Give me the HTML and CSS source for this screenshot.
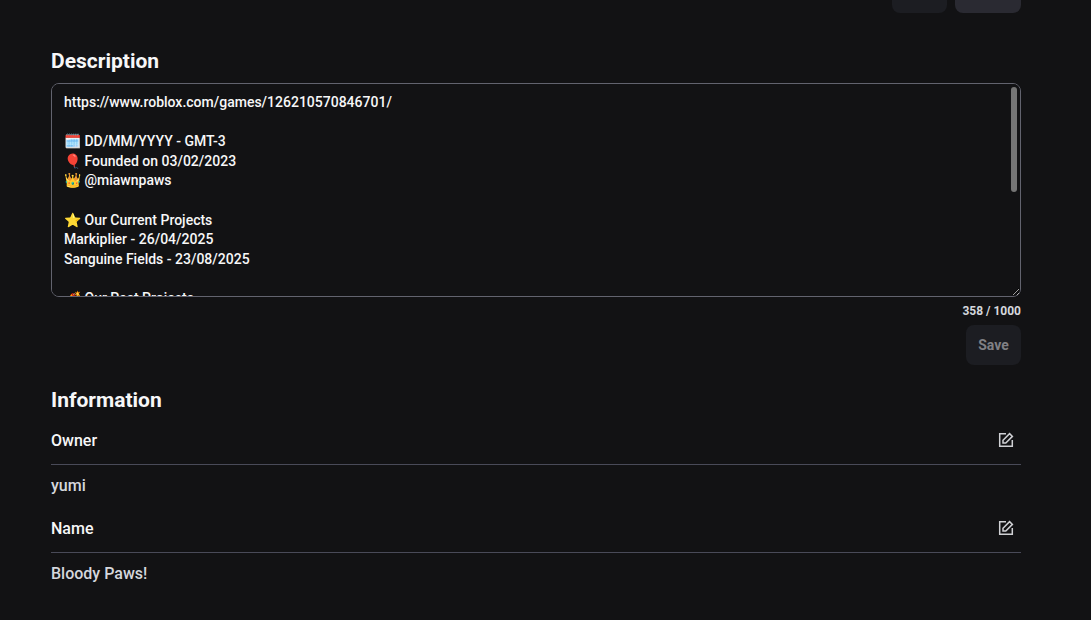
FILE: index.html
```html
<!DOCTYPE html>
<html lang="en">
<head>
  <meta charset="UTF-8">
  <meta name="viewport" content="width=device-width, initial-scale=1.0">
  <title>Configure Community</title>
  <link rel="stylesheet" href="styles.css">
</head>
<body>
  <main class="page">
    <div class="top-actions">
      <button class="btn" type="button" aria-label="Cancel" disabled></button>
      <button class="btn btn-light" type="button" aria-label="Upload"></button>
    </div>

    <section class="description">
      <h2><label for="description">Description</label></h2>
      <div class="field">
        <textarea id="description" spellcheck="false">https://www.roblox.com/games/126210570846701/

🗓️ DD/MM/YYYY - GMT-3
🎈 Founded on 03/02/2023
👑 @miawnpaws

⭐ Our Current Projects
Markiplier - 26/04/2025
Sanguine Fields - 23/08/2025

🧨 Our Past Projects









</textarea>
        <div class="scroll-thumb"></div>
      </div>
      <p class="counter">358 / 1000</p>
      <div class="save-row">
        <button class="btn save" type="button" disabled>Save</button>
      </div>
    </section>

    <section class="information">
      <h2>Information</h2>
      <div class="info-head">
        <h3>Owner</h3>
        <button class="edit" type="button" aria-label="Edit owner">
          <svg viewBox="0 0 16 16" width="16" height="16"><path d="M8 1.7H1.7v12.6h12.6V8M5 11V8.2l6.6-6.6 2.8 2.8L7.8 11z"/></svg>
        </button>
      </div>
      <p class="info-value">yumi</p>
      <div class="info-head">
        <h3>Name</h3>
        <button class="edit" type="button" aria-label="Edit name">
          <svg viewBox="0 0 16 16" width="16" height="16"><path d="M8 1.7H1.7v12.6h12.6V8M5 11V8.2l6.6-6.6 2.8 2.8L7.8 11z"/></svg>
        </button>
      </div>
      <p class="info-value">Bloody Paws!</p>
    </section>
  </main>
</body>
</html>
```
FILE: styles.css
```css
* {
  box-sizing: border-box;
}

body {
  margin: 0;
  min-height: 100vh;
  background-color: #121214;
  color: #f7f7f8;
  font-family: Roboto, "Liberation Sans", sans-serif;
  font-size: 16px;
}

h2, h3, p {
  margin: 0;
}

.page {
  padding: 0 70px 0 51px;
}

.top-actions {
  display: flex;
  justify-content: flex-end;
  gap: 8px;
}

.btn {
  width: 55px;
  height: 40px;
  padding: 0;
  border: none;
  border-radius: 8px;
  background-color: #1c1d22;
  color: #808084;
  font-family: inherit;
  font-size: 14px;
  font-weight: 700;
}

.top-actions .btn {
  height: 13px;
  border-radius: 0 0 8px 8px;
}

.top-actions .btn-light {
  width: 66px;
  background-color: #2a2a32;
}

h2 {
  font-size: 21px;
  font-weight: 700;
  line-height: 28px;
}

.description {
  padding-top: 34px;
}

.field {
  position: relative;
  margin-top: 8px;
}

textarea {
  display: block;
  width: 100%;
  height: 214px;
  padding: 9px 12px;
  border: 1px solid #62636e;
  border-radius: 8px;
  outline: none;
  background-color: #121214;
  color: #f7f7f8;
  font-family: Roboto, "Liberation Sans", sans-serif;
  font-size: 14px;
  font-weight: 500;
  line-height: 1.4;
  resize: vertical;
  scrollbar-width: none;
}

/* thin thumb drawn over the text box */
.scroll-thumb {
  position: absolute;
  top: 4px;
  right: 4px;
  width: 6px;
  height: 105px;
  border-radius: 3px;
  background-color: #757575;
  pointer-events: none;
}

.counter {
  margin-top: 4px;
  font-size: 12px;
  font-weight: 700;
  line-height: 20px;
  text-align: right;
  color: #d5d7dd;
}

.save-row {
  display: flex;
  justify-content: flex-end;
  margin-top: 4px;
}

.information {
  margin-top: 21px;
}

.info-head {
  display: flex;
  align-items: center;
  justify-content: space-between;
  height: 51px;
  padding: 2px 7px 0 0;
  border-bottom: 1px solid #494a58;
}

h3 {
  font-size: 16px;
  font-weight: 500;
}

.edit {
  display: flex;
  padding: 0;
  border: none;
  background: none;
}

.edit svg {
  fill: none;
  stroke: #cfd0d4;
  stroke-width: 1.5;
}

.info-value {
  padding: 9px 0 4px;
  font-weight: 500;
  line-height: 24px;
  color: #d5d7dd;
}
```
